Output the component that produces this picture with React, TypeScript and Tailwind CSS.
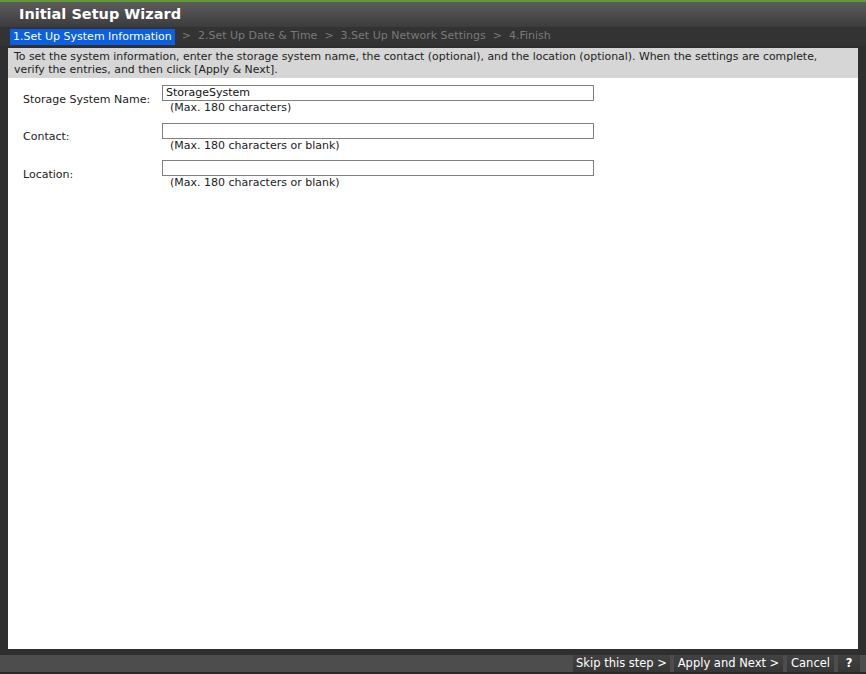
import React from "react"

const font = "font-['DejaVu_Sans',sans-serif]"

const steps = [
  "1.Set Up System Information",
  "2.Set Up Date & Time",
  "3.Set Up Network Settings",
  "4.Finish",
]

const fields = [
  { label: "Storage System Name:", value: "StorageSystem", hint: "(Max. 180 characters)" },
  { label: "Contact:", value: "", hint: "(Max. 180 characters or blank)" },
  { label: "Location:", value: "", hint: "(Max. 180 characters or blank)" },
]

const buttons = [
  { text: "Skip this step >", w: "w-[97px]" },
  { text: "Apply and Next >", w: "w-[109px]" },
  { text: "Cancel", w: "w-[47px]" },
  { text: "?", w: "w-[22px] font-bold" },
]

function FormRow({ label, value, hint }: { label: string, value: string, hint: string }) {
  return (
    <div className="flex items-center">
      <div className="w-[139px] text-[11px] text-[#222]">{label}</div>
      <div className="flex flex-col">
        <div className="h-[16px] w-[432px] border border-[#808080] bg-white px-[3px] text-[11px] leading-[14px] text-[#111]">
          {value}
        </div>
        <div className="pl-[8px] text-[11px] leading-[14px] text-[#222]">{hint}</div>
      </div>
    </div>
  )
}

export default function App() {
  return (
    <div className={`w-[866px] h-[674px] bg-[#2f2f2f] flex flex-col ${font}`}>
      <div className="h-[27px] border-t-2 border-[#5f9a33] bg-gradient-to-b from-[#5c5c5c] to-[#3c3c3c] pl-[19px] flex items-center">
        <span className="text-white font-bold text-[14.5px]">Initial Setup Wizard</span>
      </div>
      <div className="h-[19px] bg-[#333] flex items-center pl-[10px] text-[11px] text-[#7a7a7a]">
        {steps.map((s, i) => (
          <React.Fragment key={s}>
            {i > 0 && <span className="px-[7px]">&gt;</span>}
            <span className={i === 0 ? "bg-[#0b5fe3] text-white px-[3px] h-[16px] leading-[16px]" : ""}>{s}</span>
          </React.Fragment>
        ))}
      </div>
      <div className="flex-1 flex flex-col mt-[2px] mx-[8px]">
        <div className="bg-[#d6d6d6] px-[6px] py-[2px] text-[10.9px] leading-[13px] text-[#222]">
          To set the system information, enter the storage system name, the contact (optional), and the location (optional). When the settings are complete,
          <br />
          verify the entries, and then click [Apply &amp; Next].
        </div>
        <div className="flex-1 bg-white pt-[7px] pl-[15px] flex flex-col gap-[7.5px]">
          {fields.map(f => <FormRow key={f.label} {...f} />)}
        </div>
      </div>
      <div className="h-[6px]" />
      <div className="h-[17px] bg-[#4d4d4d] flex justify-end items-stretch pr-[6px] border-b-2 border-[#2a2a2a] box-content">
        {buttons.map((b, i) => (
          <button
            key={b.text}
            className={`${b.w} ${i > 0 ? "ml-[4px]" : ""} bg-gradient-to-b from-[#424242] to-[#363636] text-white text-[11.5px] leading-[17px] text-center`}
          >
            {b.text}
          </button>
        ))}
      </div>
    </div>
  )
}
